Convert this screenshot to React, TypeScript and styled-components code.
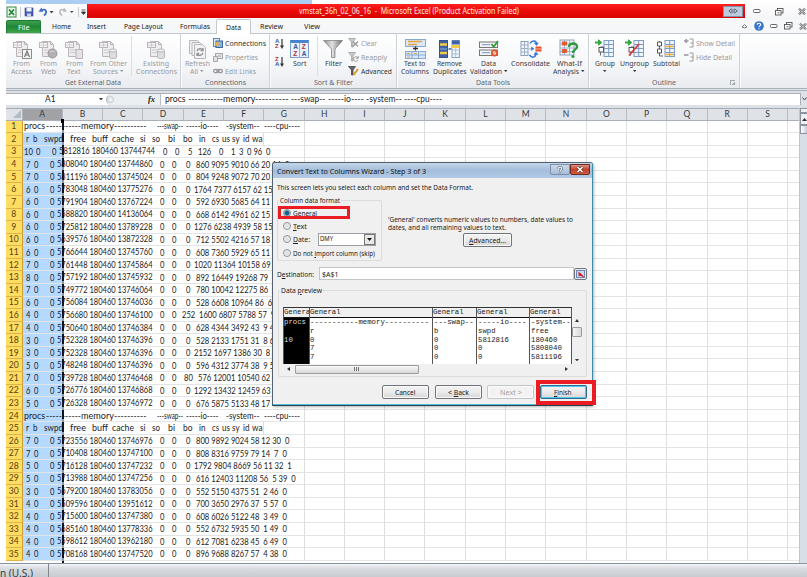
import React, { useLayoutEffect, useRef } from "react";
import styled, { createGlobalStyle, css } from "styled-components";

const Global = createGlobalStyle`
  * { box-sizing: border-box; }
  body { margin: 0; background: #fff; overflow: hidden; }
`;

const UI = '"Noto Sans", "Open Sans", sans-serif';
const SHEET = 'Lato, sans-serif';

/* ---------- text squeezed to a given width ---------- */
const FitBox = styled.span<{ $w: number; $s: number; $c?: string; $f?: string; $b?: number }>`
  display: inline-block;
  flex: none;
  width: ${(p) => p.$w}px;
  font-size: ${(p) => p.$s}px;
  line-height: 10px;
  height: 10px;
  color: ${(p) => p.$c || "#222"};
  font-family: ${(p) => p.$f || UI};
  font-weight: ${(p) => p.$b || 400};
  white-space: pre;
`;
const FitInner = styled.span`
  display: inline-block;
  transform-origin: 0 50%;
`;
type FitProps = { w: number; s?: number; c?: string; f?: string; b?: number; children: React.ReactNode };
function Fit({ w, s = 7.5, c, f, b, children }: FitProps) {
  const ref = useRef<HTMLSpanElement>(null);
  useLayoutEffect(() => {
    const el = ref.current;
    if (el && el.offsetWidth) {
      el.style.transform = "none";
      el.style.transform = `scaleX(${w / el.getBoundingClientRect().width})`;
    }
  });
  return (
    <FitBox $w={w} $s={s} $c={c} $f={f} $b={b}>
      <FitInner ref={ref}>{children}</FitInner>
    </FitBox>
  );
}

/* ---------- window frame ---------- */
const Window = styled.div`
  position: relative;
  width: 807px;
  height: 577px;
  overflow: hidden;
  display: flex;
  flex-direction: column;
  background: #fff;
`;
const Indent = styled.div`
  margin-left: 6px;
  flex: none;
  display: flex;
  flex-direction: column;
`;
const Backdrop = styled.div`
  height: 4px;
  width: 306px;
  background: #a9cdf3;
`;
const TitleBar = styled.div`
  height: 15px;
  display: flex;
  background: linear-gradient(#fdfdfe, #f4f5f7);
`;
const QuickAccess = styled.div`
  width: 81px;
  flex: none;
  display: flex;
  align-items: center;
`;
const RedBar = styled.div`
  width: 658px;
  height: 14px;
  flex: none;
  display: flex;
  align-items: center;
  padding-left: 212px;
  background: linear-gradient(#ff2020, #ee0b0b 45%, #d80000);
`;
const SwapButton = styled.div`
  margin-left: 204px;
  width: 20px;
  height: 11px;
  border: 1px solid #8294ad;
  background: #bccbdd;
  display: flex;
  align-items: center;
  justify-content: center;
`;
const WinButtons = styled.div<{ $gap: number; $pad: number }>`
  display: flex;
  align-items: center;
  gap: ${(p) => p.$gap}px;
  padding-left: ${(p) => p.$pad}px;
`;

/* ---------- tabs ---------- */
const TabBar = styled.div`
  height: 15px;
  display: flex;
  align-items: stretch;
  background: #f6f7f9;
  border-bottom: 1px solid #c3c8cf;
`;
const FileTab = styled.div`
  width: 35px;
  margin-top: 1px;
  display: flex;
  align-items: center;
  justify-content: center;
  border-radius: 2px 2px 0 0;
  border: 1px solid #1d7a35;
  border-bottom: 0;
  background: linear-gradient(#3d9f4b, #1f8536 50%, #3fa94a);
`;
const Tab = styled.div<{ $w: number; $on?: boolean }>`
  width: ${(p) => p.$w}px;
  display: flex;
  align-items: center;
  justify-content: center;
  ${(p) =>
    p.$on &&
    css`
      border: 1px solid #c3c8cf;
      border-bottom: 0;
      border-radius: 2px 2px 0 0;
      background: #fff;
      margin-bottom: -1px;
    `}
`;

/* ---------- ribbon ---------- */
const Ribbon = styled.div`
  height: 54px;
  display: flex;
  background: linear-gradient(#fefefe, #f7f8fa 50%, #e8ebef);
`;
const Group = styled.div<{ $w: number }>`
  width: ${(p) => p.$w}px;
  flex: none;
  display: flex;
  flex-direction: column;
  border-right: 1px solid #cfd3d8;
  box-shadow: 1px 0 0 #fdfdfe;
`;
const GroupBody = styled.div<{ $pad: number }>`
  height: 43px;
  display: flex;
  padding-left: ${(p) => p.$pad}px;
`;
const GroupName = styled.div`
  position: relative;
  display: flex;
  justify-content: center;
  height: 11px;
`;
const Launcher = styled.div`
  position: absolute;
  right: 4px;
  top: 3px;
  width: 5px;
  height: 5px;
  border-left: 1px solid #a4a9b0;
  border-top: 1px solid #a4a9b0;
  background: linear-gradient(135deg, transparent 60%, #a4a9b0 60%);
`;
const Big = styled.div<{ $w: number }>`
  width: ${(p) => p.$w}px;
  flex: none;
  display: flex;
  flex-direction: column;
  align-items: center;
  padding-top: 4px;
`;
const BigIcon = styled.div`
  height: 21px;
  display: flex;
  align-items: center;
  justify-content: center;
`;
const BigLine = styled.div`
  height: 8px;
  display: flex;
  align-items: center;
  gap: 2px;
`;
const Divider = styled.div`
  width: 1px;
  height: 40px;
  margin: 2px 3px 0 2px;
  background: #dcdfe3;
`;
const Stack = styled.div<{ $pad?: number; $gap?: number }>`
  display: flex;
  flex-direction: column;
  gap: ${(p) => p.$gap ?? 4}px;
  padding: 4px 0 0 ${(p) => p.$pad || 0}px;
`;
const Small = styled.div`
  height: 10px;
  display: flex;
  align-items: center;
  gap: 2px;
`;

const Caret = ({ c = "#555", s = 4 }: { c?: string; s?: number }) => (
  <svg width={s} height={s * 0.6} viewBox="0 0 10 6"><path d="M0 0h10L5 6z" fill={c} /></svg>
);

function BigButton({ w, icon, a, aw, b, bw, dim, caret }: {
  w: number; icon: React.ReactNode; a: string; aw: number; b?: string; bw?: number; dim?: boolean; caret?: boolean;
}) {
  const c = dim ? "#9a9a9e" : "#3a3a3e";
  return (
    <Big $w={w}>
      <BigIcon>{icon}</BigIcon>
      <BigLine><Fit w={aw} c={c}>{a}</Fit></BigLine>
      <BigLine>
        {b && <Fit w={bw || 20} c={c}>{b}</Fit>}
        {caret && <Caret c={c} s={3.5} />}
      </BigLine>
    </Big>
  );
}

/* ---------- ribbon icons ---------- */
const DocIcon = ({ kind }: { kind: string }) => (
  <svg width="20" height="20" viewBox="0 0 20 20" fill="#eeecee" stroke="#b9b5b9" strokeWidth="1">
    <path d="M4.500 2.500h8l3 3v12h-11z" />
    <path d="M12.500 2.500v3h3" fill="none" />
    <rect x="1.500" y="3.500" width="8" height="5" fill="#f7f5f7" />
    <path d="M1.500 6h8M5.500 3.500v5M6 11h8M6 13.500h8" stroke="#cfcbcf" />
    {kind === "A" && <><rect x="10.500" y="10.500" width="9" height="9" fill="#f5f5f5" stroke="#8d8d8d" /><path d="M12.500 18l2.500-6 2.500 6M13.300 16h3.400" fill="none" stroke="#777" strokeWidth="1.200" /></>}
    {kind === "W" && <><circle cx="14.500" cy="14.500" r="4.500" fill="#b4b0b4" stroke="#9a969a" /><path d="M12 13c2-2 3 0 4.500-.5" stroke="#dedede" fill="none" /></>}
    {kind === "T" && <rect x="12" y="10.500" width="6.500" height="9" fill="#e4e2e6" />}
    {kind === "D" && <><path d="M11.500 11.500v7c0 1.500 7 1.500 7 0v-7" fill="#ddd" /><ellipse cx="15" cy="11.500" rx="3.500" ry="1.500" fill="#f1f1f1" /></>}
  </svg>
);
const RefreshIcon = () => (
  <svg width="19" height="20" viewBox="0 0 19 20" fill="#f2f1f3" stroke="#b9b7bc">
    <path d="M1.500 1.500h8l2 2v11h-10z" /><path d="M4 3.500h8l2 2v11H4z" /><path d="M6.500 5.500h8l3 3v11h-11z" />
    <path d="M15 11a3.500 3.500 0 0 0-6 1M9 15a3.500 3.500 0 0 0 6-1M15 9v2.500h-2.500M9 17v-2.500h2" fill="none" stroke="#929096" strokeWidth="1.300" />
  </svg>
);
const ConnIcon = () => (
  <svg width="10" height="10" viewBox="0 0 10 10"><rect x=".5" y=".5" width="6" height="8" fill="#dbe8f7" stroke="#5d83b6" /><rect x="3" y="3" width="6.500" height="6.500" fill="#8fb1dc" stroke="#3f689f" /><rect x="3" y="4" width="2.500" height="4" fill="#e7b43b" /></svg>
);
const PropIcon = () => (
  <svg width="10" height="10" viewBox="0 0 10 10" fill="#e4e3e5" stroke="#a8a6aa"><rect x="2.500" y="1.500" width="7" height="5" /><path d="M.5 4.500h4v5h-4zM5 4h3" /></svg>
);
const LinkIcon = () => (
  <svg width="10" height="6" viewBox="0 0 10 6" fill="none" stroke="#98969a" strokeWidth="1.200"><ellipse cx="2.800" cy="3" rx="2.200" ry="1.700" /><ellipse cx="7.200" cy="3" rx="2.200" ry="1.700" /><path d="M3 3h4" /></svg>
);
const Letters = styled.div<{ $s: number; $l: number }>`
  display: flex;
  flex-direction: column;
  font: 700 ${(p) => p.$s}px/${(p) => p.$l}px "Liberation Sans", sans-serif;
`;
const Ink = styled.span<{ $c: string }>`color: ${(p) => p.$c};`;
const SortRow = styled.div`display: flex; height: 12px; align-items: center; gap: 1px;`;
const AZ = ({ rev }: { rev?: boolean }) => (
  <SortRow>
    <Letters $s={6} $l={5.5}>
      <Ink $c={rev ? "#a8323a" : "#2e5a9c"}>{rev ? "Z" : "A"}</Ink>
      <Ink $c={rev ? "#2e5a9c" : "#a8323a"}>{rev ? "A" : "Z"}</Ink>
    </Letters>
    <svg width="4" height="10" viewBox="0 0 4 10"><path d="M2 0v8" stroke="#333" strokeWidth="1.200" /><path d="M0 6.500h4L2 10z" fill="#333" /></svg>
  </SortRow>
);
const SortTile = styled.div`
  width: 19px;
  height: 18px;
  border: 1px solid #7d9fcb;
  border-top: 3px solid #4a84d0;
  background: linear-gradient(90deg, #eaf1fa 8px, #9ab4d6 8px, #9ab4d6 9px, #eaf1fa 9px);
  display: flex;
  justify-content: space-around;
  padding-top: 0.5px;
`;
const FilterIcon = () => (
  <svg width="20" height="19" viewBox="0 0 20 19"><defs><linearGradient id="fg"><stop offset="0" stopColor="#8a8a8a" /><stop offset=".45" stopColor="#e2e2e2" /><stop offset="1" stopColor="#6d6d6d" /></linearGradient></defs><path d="M.5 1.500h19L12 10v8.500H8.500V10z" fill="url(#fg)" stroke="#777" strokeWidth=".7" /></svg>
);
const SmallFilter = ({ k }: { k: string }) => (
  <svg width="11" height="10" viewBox="0 0 11 10"><path d="M.5.5h7L5 4v5H3.500V4z" fill={k === "adv" ? "#666" : "#c9c9cb"} stroke={k === "adv" ? "#333" : "#999"} strokeWidth=".7" />
    {k === "clear" && <path d="M5 3.500l5 5M10 3.500l-5 5" stroke="#999" strokeWidth="1.300" />}
    {k === "re" && <path d="M10 6a2.300 2.300 0 1 0 0 2M10.300 4v2.300H8" stroke="#999" fill="none" />}
    {k === "adv" && <path d="M5.500 9l4.500-6" stroke="#d79b27" strokeWidth="2" />}
  </svg>
);
const T2C = () => (
  <svg width="21" height="20" viewBox="0 0 21 20"><rect x=".5" y=".5" width="20" height="7" fill="#d9e8f9" stroke="#86a9d5" /><path d="M3 2.500h14M3 5.500h9" stroke="#e8a33c" strokeWidth="1.300" /><path d="M10.500 7.500v4M8 9.500h5" stroke="#333" strokeWidth="1.300" /><rect x=".5" y="12.500" width="20" height="7" fill="#d9e8f9" stroke="#86a9d5" /><path d="M7 12.500v7M13.500 12.500v7M.5 16h20" stroke="#86a9d5" /><path d="M2 14.500h3M9 14.500h3M2 18h3" stroke="#e8a33c" /></svg>
);
const RemDup = () => (
  <svg width="21" height="18" viewBox="0 0 21 18"><rect x=".5" y=".5" width="8" height="17" fill="#3e62a4" stroke="#35548f" /><path d="M1 4.500h7M1 13h7" stroke="#f0cb45" strokeWidth="2.500" /><path d="M1 9h7" stroke="#8fb0df" /><path d="M9.500 9h3" stroke="#3e62a4" strokeWidth="1.500" /><rect x="13" y=".5" width="7.500" height="17" fill="#f1f6fc" stroke="#86a0cc" /><rect x="13" y=".5" width="7.500" height="4" fill="#3e62a4" /><path d="M13 6.500h7.500" stroke="#f0cb45" strokeWidth="3" /><path d="M13 10h7.500M13 14h7.500M16.700 8v9.500" stroke="#a9bfde" /></svg>
);
const Valid = () => (
  <svg width="20" height="18" viewBox="0 0 20 18"><rect x=".5" y="2" width="18" height="5.500" fill="#f5f5f5" stroke="#777" /><rect x=".5" y="10" width="18" height="5.500" fill="#f5f5f5" stroke="#777" /><path d="M3 4.700h8M3 12.700h8" stroke="#8ba9cf" strokeWidth="1.300" /><path d="M12.500 4l2.200 2.700L19 1" stroke="#31a03a" strokeWidth="1.900" fill="none" /><circle cx="15.500" cy="13" r="3.600" fill="#e2532c" /><circle cx="15.500" cy="13" r="1.700" fill="#fff" /><path d="M14 14.500l3-3" stroke="#e2532c" /></svg>
);
const Consol = () => (
  <svg width="22" height="20" viewBox="0 0 22 20"><rect x="1" y="2.500" width="7" height="14" fill="#f2f6fb" stroke="#8e9fb8" /><path d="M1 6h7M1 9.500h7M1 13h7M4.500 2.500v14" stroke="#9db0cb" /><path d="M10 4.500c2-3.500 6-3 6.500 0M16 15c-1 4-4.500 4-6.500 1" fill="none" stroke="#3a78d2" strokeWidth="1.500" /><path d="M14.300 4h4L16.500 6.500zM9 9.800h3M11.500 8l2.500 1.800-2.500 1.800zM14 15.500h4L16 13z" fill="#3a78d2" stroke="#3a78d2" strokeWidth=".6" /><rect x="15.500" y="7.500" width="6" height="5" fill="#e5542c" /><path d="M15.500 10h6" stroke="#fbb59b" /></svg>
);
const WhatIf = () => (
  <svg width="20" height="20" viewBox="0 0 20 20"><rect x="1" y="1" width="14" height="15" fill="#f3f6fa" stroke="#8e9fb8" /><path d="M1 5h14M1 9h14M1 12.500h14M5.500 1v15M10.500 1v15" stroke="#9db0cb" /><path d="M3.500 3h4v3h-4zM3.500 10.500h4v3h-4z" stroke="#e25b35" strokeWidth="1.200" fill="#e25b35" /><path d="M10 8c0-5 8.500-4.500 8 0-.3 2.500-4 2.500-4 6" fill="none" stroke="#2b9b3e" strokeWidth="2.400" /><circle cx="14" cy="17.500" r="1.600" fill="#2b9b3e" /></svg>
);
const GroupIcon = ({ k }: { k: string }) => (
  <svg width="20" height="19" viewBox="0 0 20 19">
    <rect x="9" y="1.500" width="9.500" height="16" fill="#eff4fa" stroke="#7f9cc4" /><path d="M9 5.500h9.500M9 9.500h9.500M9 13.500h9.500M13.700 1.500v16" stroke="#7f9cc4" />
    {k === "s" ? <><path d="M10 7.500h8M10 15.500h8" stroke="#efa93a" strokeWidth="1.500" /><path d="M3.500 2v15H7" fill="none" stroke="#666" /><path d="M1.500 3h4v4h-4zM1.500 10h4v4h-4z" fill="#fff" stroke="#555" /></> :
      <><path d="M0 3.500h4" stroke="#3aa543" strokeWidth="2" /><path d="M3.500 .8L6.800 3.500l-3.300 2.700z" fill="#3aa543" stroke="#3aa543" /><path d="M5.500 16.500V8H9" fill="none" stroke="#666" /><rect x="4" y="8.500" width="4.500" height="4.500" fill="#fff" stroke="#555" /></>}
    {k === "u" && <path d="M4 16.500L14 5" stroke="#e03b32" strokeWidth="1.800" />}
  </svg>
);
const DetailIcon = ({ plus }: { plus?: boolean }) => (
  <svg width="10" height="10" viewBox="0 0 10 10" fill="none" stroke="#9c9a9e"><path d={plus ? "M0 3h4.500M2.200 1v4" : "M0 3h4.500"} strokeWidth="1.600" /><path d="M5.500 1h3.500v8H5.500M6.500 5H9" /></svg>
);
const MinIcon = () => <svg width="8" height="5" viewBox="0 0 8 5"><rect x=".5" y=".5" width="6.500" height="3" rx="1" fill="#fff" stroke="#555" strokeWidth=".9" /></svg>;
const RestoreIcon = () => <svg width="9" height="8" viewBox="0 0 9 8" fill="#fff" stroke="#555" strokeWidth=".9"><rect x="2.500" y=".5" width="5.500" height="4.500" /><rect x=".5" y="2.500" width="5.500" height="4.500" /><path d="M2.500 4.800h2" /></svg>;
const XIcon = () => <svg width="8" height="7" viewBox="0 0 8 7"><path d="M1 .8l6 5.400M7 .8L1 6.200" stroke="#555" strokeWidth="2.200" /><path d="M1 .8l6 5.400M7 .8L1 6.200" stroke="#fff" strokeWidth=".8" /></svg>;

/* ---------- formula bar ---------- */
const FormulaZone = styled.div`
  height: 20px;
  padding: 3.500px 0 0;
  border-top: 1px solid #a9b0b9;
  background: linear-gradient(#dfe4ea 0 1px, #aab1bb 1px 2px, #dce1e8 2px);
`;
const FormulaBar = styled.div`
  height: 12px;
  display: flex;
  align-items: center;
  background: #fff;
  border-top: 1px solid #a7aeb8;
`;
const NameBox = styled.div`
  width: 100px;
  padding-left: 39px;
  display: flex;
  align-items: center;
  gap: 43px;
`;
const FxBox = styled.div`
  width: 55px;
  height: 11px;
  display: flex;
  align-items: center;
  border-left: 1px solid #b7bdc5;
  border-right: 1px solid #b7bdc5;
  border-radius: 6px 0 0 6px;
  background: #eceff2;
`;
const FxDot = styled.div`
  width: 7px;
  height: 7px;
  border-radius: 50%;
  border: 1px solid #c3c8ce;
  margin-right: 34px;
`;
const FormulaText = styled.div`
  flex: 1;
  padding-left: 4px;
  display: flex;
`;
const Expand = styled.div`
  width: 7px;
  height: 12px;
  background: #dfe3e8;
  border-left: 1px solid #a7aeb8;
  display: flex;
  align-items: center;
  justify-content: center;
`;

/* ---------- sheet ---------- */
const PITCH = 12.59;
const COL = 40.3;
const Body = styled.div`
  position: relative;
  display: flex;
  height: 455px;
  margin-left: 6px;
  flex: none;
  overflow: hidden;
`;
const Sheet = styled.div`
  width: 793px;
  overflow: hidden;
`;
const ColHeads = styled.div`
  display: flex;
  width: 900px;
  height: 12.500px;
  border-top: 1px solid #a3abb5;
  border-bottom: 1px solid #a9b0ba;
  background: #dfe3e8;
`;
const Corner = styled.div`
  width: 16.500px;
  flex: none;
  border-right: 1px solid #aeb5be;
  display: flex;
  align-items: center;
  justify-content: flex-end;
  padding-right: 1px;
`;
const ColHead = styled.div<{ $on?: boolean }>`
  width: ${COL}px;
  flex: none;
  display: flex;
  align-items: center;
  justify-content: center;
  font: 8.500px Lato, sans-serif;
  color: #33383f;
  border-right: 1px solid #b6bcc5;
  background: ${(p) => (p.$on ? "#a0a2a6" : "transparent")};
`;
const Row = styled.div`
  display: flex;
  width: 900px;
  height: ${PITCH}px;
`;
const RowHead = styled.div`
  width: 16.500px;
  flex: none;
  display: flex;
  align-items: center;
  justify-content: center;
  font: 8.600px Lato, sans-serif;
  color: #55430f;
  background: #ffdc62;
  border-right: 1px solid #cf9f35;
  border-bottom: 1px solid #e0b24a;
`;
const Spill = styled.div<{ $cols: number; $sel: boolean }>`
  width: ${(p) => p.$cols * COL}px;
  flex: none;
  display: flex;
  align-items: center;
  overflow: hidden;
  border-bottom: 1px solid #e2e4e6;
  border-right: 1px solid #dcdfe2;
  background: ${(p) => (p.$sel ? `linear-gradient(90deg, #b6d9ff ${COL}px, #fff ${COL}px)` : "#fff")};
`;
const Slot = styled.span<{ $w: number }>`
  width: ${(p) => p.$w}px;
  flex: none;
  display: flex;
`;
const Blank = styled.div`
  width: ${COL}px;
  flex: none;
  border-right: 1px solid #dcdfe2;
  border-bottom: 1px solid #e2e4e6;
`;
const Num = styled.span`
  display: inline-block;
  white-space: pre;
  font: 9px/11px Lato, sans-serif;
  color: #1c1c1c;
  transform: scaleX(0.848);
  transform-origin: 0 50%;
`;
const Marquee = styled.div`
  position: absolute;
  left: 55.500px;
  top: 12px;
  bottom: 0;
  width: 2px;
  background: repeating-linear-gradient(#10161f 0 9.600px, #8c9bb0 9.600px 12.590px);
`;
const Handle = styled.div`
  position: absolute;
  left: 55px;
  top: 11px;
  width: 3px;
  height: 4px;
  background: #000;
`;
const Scroll = styled.div`
  width: 8px;
  background: #d9dfe7;
  border-left: 1px solid #bfc6cf;
  display: flex;
  flex-direction: column;
`;
const ScrollPart = styled.div<{ $h: number; $bg?: string }>`
  height: ${(p) => p.$h}px;
  border: 1px solid #8b939e;
  border-right: 0;
  background: ${(p) => p.$bg || "#eef1f4"};
  display: flex;
  align-items: center;
  justify-content: center;
`;

/* segments: [start x, text, optional width] */
type Seg = [number, string, number?];
function Line({ segs }: { segs: Seg[] }) {
  const first = segs[0][0] - 22.2;
  return (
    <>
      <Slot $w={first} />
      {segs.map(([x, t, w], i) => (
        <Slot key={i} $w={i < segs.length - 1 ? segs[i + 1][0] - x : 80}>
          {w ? <Fit w={w} s={9} f={SHEET} c="#1c1c1c">{t}</Fit> : <Num>{t}</Num>}
        </Slot>
      ))}
    </>
  );
}

const HEAD: Seg[] = [
  [23.5, "procs", 21], [46, "-----------", 35], [81, "memory", 33], [114, "----------", 32.5],
  [156.5, "---swap--", 26], [186, "-----io----", 32.5], [226, "-system--", 33.500], [264, "----cpu----", 36],
];
const NAMES: Seg[] = [
  [26, "r", 3], [33, "b", 4.5], [43.500, "swpd", 19], [69.500, "free", 16], [92, "buff", 16], [112, "cache", 22],
  [139.500, "si", 5.500], [152, "so", 8], [168, "bi", 7], [183, "bo", 9.500], [199, "in", 6.500], [212, "cs", 7],
  [222, "us", 8], [232, "sy", 7.500], [243, "id", 6.500], [252, "wa", 10.5],
];
const num = (r: string, mem: string, tail: string, tx = 195.3): Seg[] => [
  [25.600, r], [33.500, "0"], [49.500, "0"], [56.500, mem, 95.500], [160, "0"], [172, "0"], [185.500, "0"], [tx, tail],
];
const DATA: Seg[][] = [
  HEAD, NAMES,
  [[23.5, "10"], [36, "0"], [52, "0"], [58.5, "5812816 180460 13744744", 96], [162.5, "0"], [174.5, "0"], [188, "5"], [198, "126"], [219, "0"], [231, "1"], [238.500, "3"], [247, "0 96"], [265.5, "0"]],
  num("7", "5808040 180460 13744860", "860 9095 9010 66 20 14  0"),
  num("7", "5811196 180460 13745024", "804 9248 9072 70 20 10  0"),
  num("6", "5783048 180460 13775276", "1764 7377 6157 62 15", 194),
  num("6", "5791904 180460 13767224", "592 6930 5685 64 11"),
  num("6", "5588820 180460 14136064", "668 6142 4961 62 15"),
  num("6", "5725812 180460 13789228", "1276 6238 4939 58 15", 194),
  num("6", "5639576 180460 13872328", "712 5502 4216 57 18"),
  num("6", "5766644 180460 13745760", "608 7360 5929 65 11"),
  num("7", "5761448 180460 13745864", "1020 11364 10158 69", 194),
  num("8", "5757192 180460 13745932", "892 16449 19268 79"),
  num("7", "5749772 180460 13746064", "780 10042 12275 86"),
  num("6", "5756084 180460 13746036", "528 6608 10964 86  6"),
  [[25.6, "4"], [33.5, "0"], [49.5, "0"], [56.5, "5756680 180460 13746100", 95.500], [160, "0"], [172, "0"], [181.500, "252"], [198.700, "1600 6807 5788 57  9"]],
  num("4", "5750640 180460 13746384", "628 4344 3492 43  9 4"),
  num("3", "5752328 180460 13746396", "528 2133 1751 31  8 6"),
  num("3", "5752328 180460 13746396", "2152 1697 1386 30  8", 194),
  num("5", "5748248 180460 13746396", "596 4312 3774 38  9 5"),
  [[25.6, "7"], [33.5, "0"], [49.5, "0"], [56.5, "5739728 180460 13746468", 95.500], [160, "0"], [172, "0"], [183.500, "80"], [198, "576 12001 10540 62"]],
  num("6", "5726776 180460 13746868", "1292 13432 12459 63", 194),
  num("5", "5726328 180460 13746972", "676 5875 5133 48 17"),
  HEAD, NAMES,
  num("7", "5723556 180460 13746976", "800 9892 9024 58 12 30  0"),
  num("7", "5710408 180460 13747100", "808 8316 9759 79 14  7  0"),
  num("5", "5716128 180460 13747232", "1792 9804 8669 56 11 32  1", 194),
  num("5", "5713988 180460 13747256", "616 12403 11208 56  5 39  0"),
  num("3", "5679200 180460 13783056", "552 5150 4375 51  2 46  0"),
  num("4", "5509596 180460 13951612", "700 3650 2976 37  5 57  0"),
  num("4", "5715600 180460 13747380", "608 6026 5122 48  3 49  0"),
  num("4", "5685160 180460 13778336", "552 6732 5935 50  1 49  0"),
  num("4", "5598612 180460 13962180", "612 7081 6238 45  6 49  0"),
  num("4", "5708168 180460 13747520", "896 9688 8267 57  4 38  0"),
];

/* ---------- status bar ---------- */
const Status = styled.div`
  height: 15px;
  flex: none;
  display: flex;
  align-items: center;
  overflow: hidden;
  border-top: 1px solid #8793a1;
  background: linear-gradient(#f2f4f6, #d9dde1 30%, #c5cacf);
`;
const StatusCell = styled.div`
  width: 49px;
  height: 14px;
  border-right: 1px solid #81878e;
  padding-top: 4px;
  display: flex;
`;

/* ---------- dialog ---------- */
const Dialog = styled.div`
  position: absolute;
  left: 271.500px;
  top: 162px;
  width: 321.500px;
  height: 244px;
  display: flex;
  flex-direction: column;
  background: #f0f0f0;
  border: 1px solid #53606e;
  border-right: 1.500px solid #3c8ca5;
  border-bottom: 1px solid #23434f;
  border-radius: 3px 3px 0 0;
  box-shadow: inset 0 -1px #52c1dc, 1px 1px 3px rgba(0, 0, 0, 0.3);
`;
const DTitle = styled.div`
  height: 15px;
  flex: none;
  display: flex;
  align-items: center;
  padding: 0 2px 0 4px;
  border-radius: 2px 2px 0 0;
  background: linear-gradient(#c4d6ea, #a3bddb 50%, #b3cae4);
`;
const DButtons = styled.div`
  margin-left: auto;
  display: flex;
  align-self: flex-start;
`;
const DBtn = styled.div<{ $red?: boolean }>`
  width: 20px;
  height: 11px;
  margin-top: 1px;
  display: flex;
  align-items: center;
  justify-content: center;
  border: 1px solid ${(p) => (p.$red ? "#6d2a22" : "#7d8fa8")};
  border-radius: 0 0 2px 2px;
  background: ${(p) => (p.$red ? "linear-gradient(#dd9383, #c2432c 50%, #cf5a3b)" : "linear-gradient(#cad9ea, #a7bdd7)")};
`;
const DBody = styled.div`
  flex: 1;
  display: flex;
  flex-direction: column;
  padding: 4px 5px 0 4.500px;
`;
const FormatRow = styled.div`
  display: flex;
  height: 62px;
  margin-top: 8px;
`;
const FieldSet = styled.div<{ $w: number; $h: number }>`
  width: ${(p) => p.$w}px;
  height: ${(p) => p.$h}px;
  flex: none;
  border: 1px solid #dcdcdc;
  border-radius: 2px;
`;
const Legend = styled.div`
  display: flex;
  width: max-content;
  height: 10px;
  margin: -6px 0 0 1px;
  padding: 0 1px;
  background: #f0f0f0;
`;
const Radios = styled.div`
  display: flex;
  flex-direction: column;
  padding: 2px 0 0 4.500px;
`;
const Option = styled.div<{ $h: number }>`
  height: ${(p) => p.$h}px;
  display: flex;
  align-items: center;
`;
const Radio = styled.span<{ $on?: boolean }>`
  width: 8px;
  height: 8px;
  margin-right: 2.500px;
  border-radius: 50%;
  border: 1px solid #8f9296;
  background: ${(p) => (p.$on ? "radial-gradient(#1b5c86 0 1.800px, #8fd0ec 3px)" : "radial-gradient(#dcdcdc, #f6f6f6)")};
`;
const Select = styled.div`
  margin-left: 8px;
  width: 58px;
  height: 13px;
  display: flex;
  align-items: center;
  justify-content: space-between;
  background: #fff;
  border: 1px solid #9ba0a6;
  padding-left: 1px;
`;
const Drop = styled.div`
  width: 11px;
  height: 11px;
  border: 1px solid #777;
  background: #e9e9e9;
  display: flex;
  align-items: center;
  justify-content: center;
`;
const Explain = styled.div`
  display: flex;
  flex-direction: column;
  padding: 15px 0 0 6px;
`;
const ExplainLine = styled.div`
  height: 8px;
  display: flex;
  align-items: center;
`;
const Button = styled.div<{ $w: number; $kind?: string }>`
  width: ${(p) => p.$w}px;
  height: 14px;
  flex: none;
  display: flex;
  align-items: center;
  justify-content: center;
  border-radius: 2px;
  border: 1px solid ${(p) => (p.$kind === "off" ? "#c4c7ca" : p.$kind === "focus" ? "#2b6c8f" : "#70747a")};
  box-shadow: ${(p) => (p.$kind === "focus" ? "inset 0 0 0 1px #55c7ee" : "inset 0 0 0 1px #fafafa")};
  background: ${(p) => (p.$kind === "off" ? "#f3f3f3" : "linear-gradient(#f3f3f3, #ebebeb 50%, #d6d6d6)")};
`;
const AdvSlot = styled.div`
  margin: 2px 0 0 75px;
`;
const DestRow = styled.div`
  display: flex;
  align-items: center;
  height: 13px;
  margin-top: 5px;
`;
const DestInput = styled.div`
  margin-left: 5px;
  width: 255px;
  height: 12.500px;
  display: flex;
  align-items: center;
  background: #fff;
  border: 1px solid #c2c5ca;
  padding-left: 2px;
`;
const RefBtn = styled.div`
  width: 13px;
  height: 12px;
  border: 1px solid #71767d;
  border-radius: 2px;
  background: #e7eaf0;
  display: flex;
  align-items: center;
  justify-content: center;
`;
const PreviewWrap = styled.div`
  margin: 10px 0 0 0.500px;
`;
const Preview = styled.div`
  display: flex;
  margin: 12px 0 0 4px;
  height: 57px;
`;
const PTable = styled.div`
  width: 289px;
  display: flex;
  background: #fff;
  border-top: 1px solid #333;
  border-left: 1px solid #555;
  overflow: hidden;
`;
const PCol = styled.div<{ $w: number; $sel?: boolean }>`
  width: ${(p) => p.$w}px;
  flex: none;
  overflow: hidden;
  border-right: 1px solid #555;
  background: ${(p) => (p.$sel ? "#000" : "#fff")};
`;
const PHead = styled.div`
  height: 9.500px;
  background: #f0f0f0;
  border-bottom: 1.500px solid #111;
  display: flex;
  align-items: center;
  overflow: hidden;
`;
const PLine = styled.div`
  height: 8.800px;
  padding-left: 0.500px;
  display: flex;
  align-items: center;
`;
const VBar = styled.div`
  width: 11px;
  display: flex;
  flex-direction: column;
  align-items: center;
  padding: 12px 0 3px;
`;
const VThumb = styled.div`
  width: 10px;
  height: 10px;
  margin: 5px 0 auto;
  border: 1px solid #9a9da1;
  border-radius: 1px;
  background: linear-gradient(90deg, #f6f6f6, #dadada);
`;
const HBar = styled.div`
  display: flex;
  align-items: center;
  width: 289px;
  height: 10px;
  margin-left: 4px;
  padding: 0 4px;
`;
const HThumb = styled.div`
  width: 124.500px;
  height: 9px;
  margin: 0 auto 0 5px;
  border: 1px solid #9a9da1;
  border-radius: 1px;
  background: linear-gradient(#f8f8f8, #d8d8d8);
  display: flex;
  align-items: center;
  justify-content: center;
`;
const Actions = styled.div`
  display: flex;
  margin: 8px 0 0 105px;
  gap: 5.500px;
`;
const Mark = styled.div<{ $x: number; $y: number; $w: number; $h: number; $t: number }>`
  position: absolute;
  left: ${(p) => p.$x}px;
  top: ${(p) => p.$y}px;
  width: ${(p) => p.$w}px;
  height: ${(p) => p.$h}px;
  border: ${(p) => p.$t}px solid #ec1c24;
`;

const MONO = '"Liberation Mono", monospace';
const PREVIEW: { w: number; lines: string[]; sel?: boolean }[] = [
  { w: 26, sel: true, lines: ["procs", "", "10"] },
  { w: 123.500, lines: ["-----------memory----------", "r", "0", "7", "7"] },
  { w: 44, lines: ["---swap--", "b", "0", "0", "0"] },
  { w: 53, lines: ["-----io----", "swpd", "5812816", "0", "0"] },
  { w: 41.500, lines: ["-system--", "free", "180460", "5808040", "5811196"] },
];

export default function App() {
  return (
    <>
      <Global />
      <Window>
        <Indent>
          <Backdrop />
          <TitleBar>
            <QuickAccess>
              <svg width="81" height="14" viewBox="0 0 81 14">
                <rect x="1" y="2" width="9" height="10" fill="#e9f4e8" stroke="#3d8a45" />
                <path d="M3 4.500l5 5.500M8 4.500L3 10" stroke="#1f8436" strokeWidth="1.700" />
                <path d="M14.500 2v10M72.500 2v10" stroke="#c6cad0" />
                <rect x="19" y="3" width="8" height="8" fill="#4a5fb8" stroke="#35458e" strokeWidth=".6" /><path d="M20.500 3h5v3.500h-5z" fill="#f0f3fb" /><path d="M21 8.500h4V11h-4z" fill="#cdd5ee" />
                <path d="M35 5.500c5-3 7 2 3 5" fill="none" stroke="#3f6fc6" strokeWidth="1.800" /><path d="M32.500 6.500l3-4 1.500 4.500z" fill="#3f6fc6" />
                <path d="M43.500 6h4l-2 2.500zM64 6h3.500l-1.700 2z" fill="#444" />
                <path d="M59 5.500c-5-3-7 2-3 5" fill="none" stroke="#b5b8bd" strokeWidth="1.500" /><path d="M61 6.500l-3-4-1 4.500z" fill="#b5b8bd" />
                <path d="M75.500 5h4M75.500 7h4l-2 2.500z" fill="#333" stroke="#333" strokeWidth=".8" />
              </svg>
            </QuickAccess>
            <RedBar>
              <Fit w={220} s={8} c="#ffe9e6">vmstat_36h_02_06_16  -  Microsoft Excel (Product Activation Failed)</Fit>
              <SwapButton>
                <svg width="10" height="6" viewBox="0 0 10 6"><path d="M3.500 .8L.8 3l2.700 2.200M6.500 .8L9.200 3 6.500 5.200M3 2h4M3 4h4" fill="none" stroke="#556" strokeWidth=".9" /></svg>
              </SwapButton>
            </RedBar>
            <WinButtons $gap={14} $pad={8}><MinIcon /><RestoreIcon /><XIcon /></WinButtons>
          </TitleBar>
          <TabBar>
            <FileTab><Fit w={11.5} c="#fff">File</Fit></FileTab>
            <Tab $w={41}><Fit w={19}>Home</Fit></Tab>
            <Tab $w={31}><Fit w={19}>Insert</Fit></Tab>
            <Tab $w={62}><Fit w={39}>Page Layout</Fit></Tab>
            <Tab $w={42}><Fit w={30}>Formulas</Fit></Tab>
            <Tab $w={35} $on><Fit w={15}>Data</Fit></Tab>
            <Tab $w={42}><Fit w={23}>Review</Fit></Tab>
            <Tab $w={40}><Fit w={16}>View</Fit></Tab>
            <WinButtons $gap={6} $pad={409}>
              <svg width="7" height="6" viewBox="0 0 7 6"><path d="M1 4L3.500 1.500 6 4 3.500 5z" fill="none" stroke="#777" /></svg>
              <svg width="10" height="10" viewBox="0 0 10 10"><circle cx="5" cy="5" r="4.800" fill="#3a75c9" /><path d="M3.300 3.800c0-2.300 3.600-2 3.400 0C6.600 5 5 4.900 5 6.300M5 7.300v1" fill="none" stroke="#fff" strokeWidth="1.100" /></svg>
              <MinIcon /><RestoreIcon /><XIcon />
            </WinButtons>
          </TabBar>
          <Ribbon>
            <Group $w={175}>
              <GroupBody $pad={2}>
                <BigButton w={27} icon={<DocIcon kind="A" />} a="From" aw={17} b="Access" bw={21} dim />
                <BigButton w={26} icon={<DocIcon kind="W" />} a="From" aw={17} b="Web" bw={15} dim />
                <BigButton w={26} icon={<DocIcon kind="T" />} a="From" aw={17} b="Text" bw={13.500} dim />
                <BigButton w={42} icon={<DocIcon kind="D" />} a="From Other" aw={37} b="Sources" bw={25} dim caret />
                <Divider />
                <BigButton w={42} icon={<DocIcon kind="D" />} a="Existing" aw={26} b="Connections" bw={41} dim />
              </GroupBody>
              <GroupName><Fit w={56} s={7.3} c="#5f6670">Get External Data</Fit></GroupName>
            </Group>
            <Group $w={89}>
              <GroupBody $pad={2}>
                <BigButton w={28} icon={<RefreshIcon />} a="Refresh" aw={25} b="All" bw={8} dim caret />
                <Stack $pad={2}>
                  <Small><ConnIcon /><Fit w={41} c="#333">Connections</Fit></Small>
                  <Small><PropIcon /><Fit w={33} c="#9a9a9e">Properties</Fit></Small>
                  <Small><LinkIcon /><Fit w={31} c="#9a9a9e">Edit Links</Fit></Small>
                </Stack>
              </GroupBody>
              <GroupName><Fit w={41} s={7.3} c="#5f6670">Connections</Fit></GroupName>
            </Group>
            <Group $w={127}>
              <GroupBody $pad={5}>
                <Stack $gap={6}><AZ /><AZ rev /></Stack>
                <Big $w={31}>
                  <BigIcon>
                    <SortTile>
                      <Letters $s={6.5} $l={7}><Ink $c="#2e5a9c">A</Ink><Ink $c="#a8323a">Z</Ink></Letters>
                      <Letters $s={6.5} $l={7}><Ink $c="#a8323a">Z</Ink><Ink $c="#2e5a9c">A</Ink></Letters>
                    </SortTile>
                  </BigIcon>
                  <BigLine><Fit w={13.5} c="#3a3a3e">Sort</Fit></BigLine>
                </Big>
                <Divider />
                <BigButton w={24} icon={<FilterIcon />} a="Filter" aw={17} />
                <Stack $pad={3}>
                  <Small><SmallFilter k="clear" /><Fit w={16} c="#9a9a9e">Clear</Fit></Small>
                  <Small><SmallFilter k="re" /><Fit w={26} c="#9a9a9e">Reapply</Fit></Small>
                  <Small><SmallFilter k="adv" /><Fit w={31} c="#333">Advanced</Fit></Small>
                </Stack>
              </GroupBody>
              <GroupName><Fit w={39} s={7.3} c="#5f6670">Sort &amp; Filter</Fit></GroupName>
            </Group>
            <Group $w={192}>
              <GroupBody $pad={2}>
                <BigButton w={32} icon={<T2C />} a="Text to" aw={21.5} b="Columns" bw={28} />
                <BigButton w={37} icon={<RemDup />} a="Remove" aw={25} b="Duplicates" bw={33.5} />
                <BigButton w={41} icon={<Valid />} a="Data" aw={15} b="Validation" bw={32} caret />
                <BigButton w={43} icon={<Consol />} a="Consolidate" aw={39} />
                <BigButton w={34} icon={<WhatIf />} a="What-If" aw={25} b="Analysis" bw={26} caret />
              </GroupBody>
              <GroupName><Fit w={34} s={7.3} c="#5f6670">Data Tools</Fit></GroupName>
            </Group>
            <Group $w={151}>
              <GroupBody $pad={3}>
                <BigButton w={26} icon={<GroupIcon k="g" />} a="Group" aw={20} caret />
                <BigButton w={33} icon={<GroupIcon k="u" />} a="Ungroup" aw={29} caret />
                <BigButton w={30} icon={<GroupIcon k="s" />} a="Subtotal" aw={27} />
                <Stack $pad={3}>
                  <Small><DetailIcon plus /><Fit w={39} c="#9a9a9e">Show Detail</Fit></Small>
                  <Small><DetailIcon /><Fit w={36} c="#9a9a9e">Hide Detail</Fit></Small>
                </Stack>
              </GroupBody>
              <GroupName><Fit w={24} s={7.3} c="#5f6670">Outline</Fit><Launcher /></GroupName>
            </Group>
          </Ribbon>
          <FormulaZone>
            <FormulaBar>
              <NameBox><Fit w={10.5} s={8.5} f={SHEET}>A1</Fit><Caret c="#333" /></NameBox>
              <FxBox><FxDot /><Fit w={7} s={9} f={'"Liberation Serif", serif'} b={700}><i>fx</i></Fit></FxBox>
              <FormulaText>
                <Fit w={20.500} s={9} f={SHEET}>procs</Fit>
                <Fit w={37} s={9} f={SHEET}> -----------</Fit>
                <Fit w={32.500} s={9} f={SHEET}>memory</Fit>
                <Fit w={36} s={9} f={SHEET}>---------- </Fit>
                <Fit w={36.500} s={9} f={SHEET}>---swap-- </Fit>
                <Fit w={38} s={9} f={SHEET}>-----io---- </Fit>
                <Fit w={38} s={9} f={SHEET}>-system-- </Fit>
                <Fit w={38} s={9} f={SHEET}>----cpu----</Fit>
              </FormulaText>
              <Expand><svg width="5" height="4" viewBox="0 0 5 4"><path d="M.5.5l2 2.500 2-2.500" fill="none" stroke="#444" /></svg></Expand>
            </FormulaBar>
          </FormulaZone>
        </Indent>
        <Body>
          <Sheet>
            <ColHeads>
              <Corner><svg width="8" height="8" viewBox="0 0 8 8"><path d="M8 0v8H0z" fill="#b4bbc4" /></svg></Corner>
              {"ABCDEFGHIJKLMNOPQRS ".split("").map((c, i) => <ColHead key={i} $on={i === 0}>{c}</ColHead>)}
            </ColHeads>
            {DATA.map((segs, i) => {
              const cols = segs === NAMES ? 6 : 7;
              return (
                <Row key={i}>
                  <RowHead>{i + 1}</RowHead>
                  <Spill $cols={cols} $sel={i > 0}><Line segs={segs} /></Spill>
                  {Array.from({ length: 20 - cols }, (_, k) => <Blank key={k} />)}
                </Row>
              );
            })}
          </Sheet>
          <Scroll>
            <ScrollPart $h={5} />
            <ScrollPart $h={12}><svg width="5" height="3" viewBox="0 0 5 3"><path d="M0 3h5L2.500 0z" fill="#333" /></svg></ScrollPart>
            <ScrollPart $h={9} $bg="linear-gradient(90deg,#fff,#c5ccd5)" />
          </Scroll>
          <Marquee /><Handle />
        </Body>
        <Status>
          <StatusCell><Fit w={33} s={10.5} c="#333a44">n (U.S.)</Fit></StatusCell>
        </Status>

        <Dialog>
          <DTitle>
            <Fit w={149} s={7.6} c="#111">Convert Text to Columns Wizard - Step 3 of 3</Fit>
            <DButtons>
              <DBtn><svg width="6" height="8" viewBox="0 0 6 8"><path d="M1.200 2.800c0-2.400 3.800-2.200 3.600 0C4.700 4 3 4 3 5.500M3 6.500v1" fill="none" stroke="#4a586c" strokeWidth="2.200" /><path d="M1.200 2.800c0-2.400 3.800-2.200 3.600 0C4.700 4 3 4 3 5.500M3 6.500v1" fill="none" stroke="#fff" strokeWidth="1.100" /></svg></DBtn>
              <DBtn $red><svg width="8" height="7" viewBox="0 0 8 7"><path d="M1.500 1l5 5M6.500 1l-5 5" stroke="#5a2a26" strokeWidth="2.800" /><path d="M1.500 1l5 5M6.500 1l-5 5" stroke="#fff" strokeWidth="1.600" /></svg></DBtn>
            </DButtons>
          </DTitle>
          <DBody>
            <Fit w={196} s={7.3}>This screen lets you select each column and set the Data Format.</Fit>
            <FormatRow>
              <FieldSet $w={105} $h={61}>
                <Legend><Fit w={60} s={7.3}>Column data format</Fit></Legend>
                <Radios>
                  <Option $h={12.5}><Radio $on /><Fit w={24} s={7.3}>General</Fit></Option>
                  <Option $h={12.5}><Radio /><Fit w={14} s={7.3}><u>T</u>ext</Fit></Option>
                  <Option $h={14.5}>
                    <Radio /><Fit w={17} s={7.3}><u>D</u>ate:</Fit>
                    <Select><Fit w={13} s={7}>DMY</Fit><Drop><Caret c="#111" s={5} /></Drop></Select>
                  </Option>
                  <Option $h={13}><Radio /><Fit w={82} s={7.3}>Do not <u>i</u>mport column (skip)</Fit></Option>
                </Radios>
              </FieldSet>
              <Explain>
                <ExplainLine><Fit w={185} s={7.3}>'General' converts numeric values to numbers, date values to</Fit></ExplainLine>
                <ExplainLine><Fit w={118} s={7.3}>dates, and all remaining values to text.</Fit></ExplainLine>
                <AdvSlot><Button $w={49}><Fit w={37} s={7.3}><u>A</u>dvanced...</Fit></Button></AdvSlot>
              </Explain>
            </FormatRow>
            <DestRow>
              <Fit w={37} s={7.3}>D<u>e</u>stination:</Fit>
              <DestInput><Fit w={16.500} s={7.3}>$A$1</Fit></DestInput>
              <RefBtn><svg width="9" height="8" viewBox="0 0 9 8"><rect x=".5" y=".5" width="8" height="7" fill="#c9d8ef" stroke="#6b87b8" /><path d="M2.500 1.500v4.500h4.500z" fill="#d5232b" /><path d="M4 3.500L7.500 7" stroke="#d5232b" strokeWidth="1.300" /></svg></RefBtn>
            </DestRow>
            <PreviewWrap>
              <FieldSet $w={309} $h={87}>
                <Legend><Fit w={41} s={7.3}>Data <u>p</u>review</Fit></Legend>
                <Preview>
                  <PTable>
                    {PREVIEW.map((p, i) => (
                      <PCol key={i} $w={p.w} $sel={p.sel}>
                        <PHead><Fit w={30.5} s={7.5} f={MONO}>General</Fit></PHead>
                        {p.lines.map((l, k) => (
                          <PLine key={k}>{l && <Fit w={l.length * 4.4} s={7.5} f={MONO} c={p.sel ? "#ddd" : "#222"}>{l}</Fit>}</PLine>
                        ))}
                      </PCol>
                    ))}
                  </PTable>
                  <VBar>
                    <svg width="4" height="3" viewBox="0 0 4 3"><path d="M0 3h4L2 0z" fill="#333" /></svg>
                    <VThumb />
                    <Caret c="#333" />
                  </VBar>
                </Preview>
                <HBar>
                  <svg width="3" height="4" viewBox="0 0 3 4"><path d="M3 0v4L0 2z" fill="#333" /></svg>
                  <HThumb><svg width="5" height="4" viewBox="0 0 5 4"><path d="M.5 0v4M2.500 0v4M4.500 0v4" stroke="#555" strokeWidth=".8" /></svg></HThumb>
                  <svg width="3" height="4" viewBox="0 0 3 4"><path d="M0 0v4L3 2z" fill="#333" /></svg>
                </HBar>
              </FieldSet>
            </PreviewWrap>
            <Actions>
              <Button $w={47}><Fit w={20.500} s={7.3}>Cancel</Fit></Button>
              <Button $w={47}><Fit w={21} s={7.3}>&lt; <u>B</u>ack</Fit></Button>
              <Button $w={47} $kind="off"><Fit w={22} s={7.3} c="#a3a3a3">Next &gt;</Fit></Button>
              <Button $w={47} $kind="focus"><Fit w={17.500} s={7.3}><u>F</u>inish</Fit></Button>
            </Actions>
          </DBody>
        </Dialog>
        <Mark $x={278} $y={205.5} $w={72} $h={13} $t={3} />
        <Mark $x={536} $y={380} $w={60} $h={24.5} $t={4} />
      </Window>
    </>
  );
}
